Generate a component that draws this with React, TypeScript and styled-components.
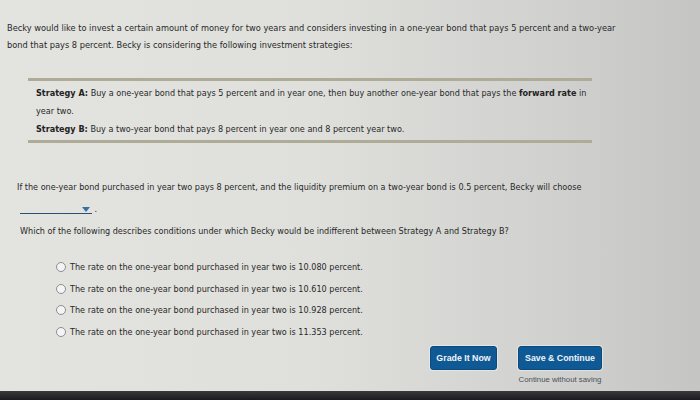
import React from "react";
import styled, { createGlobalStyle } from "styled-components";

const GlobalStyle = createGlobalStyle`
    html, body {
        margin: 0;
        padding: 0;
    }
    body {
        font-family: "DejaVu Sans", Verdana, sans-serif;
    }
`;

const Page = styled.div`
    width: 700px;
    height: 400px;
    overflow: hidden;
    display: flex;
    flex-direction: column;
    background: linear-gradient(90deg, #e3e3df 0%, #dfe0dc 45%, #d0d1ce 80%, #c5c6c4 100%);
    color: #282828;
    font-size: 8.1px;
`;

const Content = styled.div`
    flex: 1;
    padding: 20px 0 0 7px;
    display: flex;
    flex-direction: column;
`;

const Intro = styled.p`
    margin: 0;
    width: 618px;
    font-size: 8.25px;
    line-height: 17px;
`;

const StrategyBox = styled.div`
    margin: 24px 0 0 21px;
    width: 564px;
    border-top: 3px solid #aeac96;
    border-bottom: 3px solid #aeac96;
    padding: 3px 0 2px 8px;
    box-sizing: border-box;
`;

const StrategyLine = styled.p`
    margin: 0;
    line-height: 18px;
    b {
        font-weight: bold;
        color: #222;
    }
`;

const Prompt = styled.p`
    margin: 33px 0 0 10px;
    width: 580px;
    line-height: 22px;
`;

const Dropdown = styled.span`
    display: inline-flex;
    align-items: flex-end;
    justify-content: flex-end;
    width: 72px;
    height: 12px;
    margin-left: 3px;
    border-bottom: 1px solid #2c4f77;
    vertical-align: baseline;
    box-sizing: border-box;
    padding-right: 2px;
    padding-bottom: 1px;
`;

const Caret = styled.svg`
    width: 8px;
    height: 5px;
    display: block;
`;

const Question = styled.p`
    margin: 3px 0 0 13px;
    line-height: 17px;
`;

const Options = styled.div`
    margin: 16px 0 0 49px;
    display: flex;
    flex-direction: column;
`;

const Option = styled.label`
    display: flex;
    align-items: center;
    gap: 4px;
    height: 21.7px;
`;

const Radio = styled.span`
    width: 8px;
    height: 8px;
    border-radius: 50%;
    border: 1px solid #8a8f95;
    background: #f4f4f4;
    flex-shrink: 0;
`;

const Actions = styled.div`
    margin: 3px 0 0 423px;
    display: flex;
    gap: 21px;
    align-items: flex-start;
`;

const Button = styled.button<{ $width: number }>`
    width: ${(p) => p.$width}px;
    height: 24px;
    border: 1px solid #0c4a7c;
    border-radius: 3px;
    background: #0f5a95;
    color: #f2f5f8;
    font-family: "Liberation Sans", Arial, sans-serif;
    font-weight: bold;
    font-size: 8.8px;
    padding: 0;
    box-shadow: 0 0 0 1px rgba(255, 255, 255, 0.4);
`;

const SaveGroup = styled.div`
    display: flex;
    flex-direction: column;
    align-items: center;
    gap: 5px;
`;

const SkipLink = styled.span`
    font-family: "Liberation Sans", Arial, sans-serif;
    font-size: 7.8px;
    color: #4a5058;
`;

const Bezel = styled.div`
    height: 9px;
    background: linear-gradient(180deg, #3a3a3e 0%, #1b1b1f 100%);
`;

const options = ["10.080", "10.610", "10.928", "11.353"];

const App = () => {
    return (
        <Page>
            <GlobalStyle />
            <Content>
                <Intro>
                    Becky would like to invest a certain amount of money for two years and considers
                    investing in a one-year bond that pays 5 percent and a two-year bond that pays 8
                    percent. Becky is considering the following investment strategies:
                </Intro>
                <StrategyBox>
                    <StrategyLine>
                        <b>Strategy A:</b> Buy a one-year bond that pays 5 percent and in year one, then
                        buy another one-year bond that pays the <b>forward rate</b> in{" "}
                        {"year two."}
                    </StrategyLine>
                    <StrategyLine>
                        <b>Strategy B:</b> Buy a two-year bond that pays 8 percent in year one and 8
                        percent year two.
                    </StrategyLine>
                </StrategyBox>
                <Prompt>
                    If the one-year bond purchased in year two pays 8 percent, and the liquidity premium
                    on a two-year bond is 0.5 percent, Becky will choose{" "}
                    <Dropdown>
                        <Caret viewBox="0 0 8 5">
                            <path d="M0 0 H8 L4 5 Z" fill="#3d6fa6" />
                        </Caret>
                    </Dropdown>{" "}
                    .
                </Prompt>
                <Question>
                    Which of the following describes conditions under which Becky would be indifferent
                    between Strategy A and Strategy B?
                </Question>
                <Options>
                    {options.map((rate) => (
                        <Option key={rate}>
                            <Radio />
                            The rate on the one-year bond purchased in year two is {rate} percent.
                        </Option>
                    ))}
                </Options>
                <Actions>
                    <Button $width={67}>Grade It Now</Button>
                    <SaveGroup>
                        <Button $width={84}>Save &amp; Continue</Button>
                        <SkipLink>Continue without saving</SkipLink>
                    </SaveGroup>
                </Actions>
            </Content>
            <Bezel />
        </Page>
    );
};

export default App;
